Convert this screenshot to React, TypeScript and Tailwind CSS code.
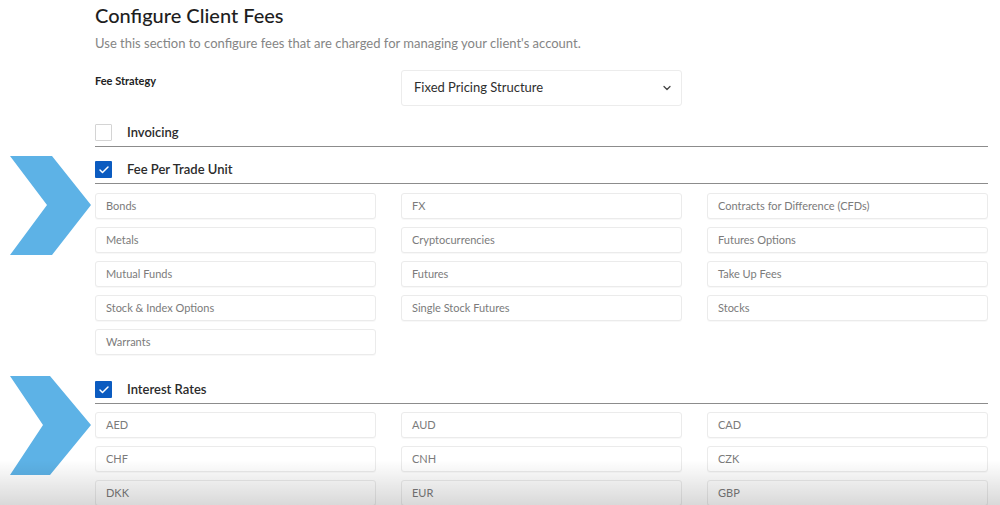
import { ChevronDown, Check } from 'lucide-react';

const feeTypes = [
  'Bonds',
  'FX',
  'Contracts for Difference (CFDs)',
  'Metals',
  'Cryptocurrencies',
  'Futures Options',
  'Mutual Funds',
  'Futures',
  'Take Up Fees',
  'Stock & Index Options',
  'Single Stock Futures',
  'Stocks',
  'Warrants',
];

const currencies = ['AED', 'AUD', 'CAD', 'CHF', 'CNH', 'CZK', 'DKK', 'EUR', 'GBP', 'HKD', 'HUF', 'ILS'];

function SectionHeader({ label, checked, className }: { label: string; checked: boolean; className: string }) {
  return (
    <div className={`flex h-[28px] items-center gap-[15px] border-b border-[#8c8c8c] ${className}`}>
      {checked ? (
        <span className="flex h-[17px] w-[17px] items-center justify-center rounded-[1px] bg-[#0b5bc0]">
          <Check size={12} strokeWidth={3} className="text-white" />
        </span>
      ) : (
        <span className="h-[17px] w-[17px] rounded-[1px] border border-[#d4d4d4] bg-white" />
      )}
      <span className="text-[13px] font-semibold text-[#2b2b2b]">{label}</span>
    </div>
  );
}

function FieldGrid({ items, className }: { items: string[]; className: string }) {
  return (
    <div className={`grid grid-cols-3 gap-x-[25px] gap-y-[8px] ${className}`}>
      {items.map((item) => (
        <div
          key={item}
          className="flex h-[26px] items-center rounded-[3px] border border-[#ebebeb] bg-white pl-[10px] text-[11px] text-[#7b7b7b] shadow-[0_1px_1px_rgba(0,0,0,0.03)]"
        >
          {item}
        </div>
      ))}
    </div>
  );
}

export default function App() {
  return (
    <div className="relative h-[505px] overflow-hidden bg-white font-['Lato',sans-serif]">
      <div className="pl-[95px] pr-[12px] pt-[3px]">
        <h1 className="text-[20px] leading-[24px] font-medium text-[#1e1e1e]">Configure Client Fees</h1>
        <p className="mt-[7px] text-[13px] leading-[18px] text-[#858585]">
          Use this section to configure fees that are charged for managing your client's account.
        </p>

        <div className="mt-[18px] grid grid-cols-3 gap-x-[25px]">
          <div className="pt-[3px] text-[11px] font-bold text-[#222]">Fee Strategy</div>
          <div className="flex h-[36px] items-center justify-between rounded-[3px] border border-[#ececec] pl-[12px] pr-[8px] text-[13px] text-[#2e2e2e]">
            <span>Fixed Pricing Structure</span>
            <ChevronDown size={12} strokeWidth={2.5} className="text-[#444]" />
          </div>
        </div>

        <SectionHeader label="Invoicing" checked={false} className="mt-[13px]" />
        <SectionHeader label="Fee Per Trade Unit" checked className="mt-[9px]" />
        <FieldGrid items={feeTypes} className="mt-[9px]" />

        <SectionHeader label="Interest Rates" checked className="mt-[21px]" />
        <FieldGrid items={currencies} className="mt-[8px]" />
      </div>

      {/* highlight arrows */}
      <svg className="absolute left-0 top-0" width="100" height="505" viewBox="0 0 100 505">
        <polygon points="10,156 52,156 91,205 52,255 10,255 47,205" fill="#5db2e6" />
        <polygon points="10,376 50,376 91,425 50,475 10,475 43,425" fill="#5db2e6" />
      </svg>

      <div className="pointer-events-none absolute inset-x-0 bottom-0 h-[45px] bg-gradient-to-b from-black/0 to-black/15" />
    </div>
  );
}
